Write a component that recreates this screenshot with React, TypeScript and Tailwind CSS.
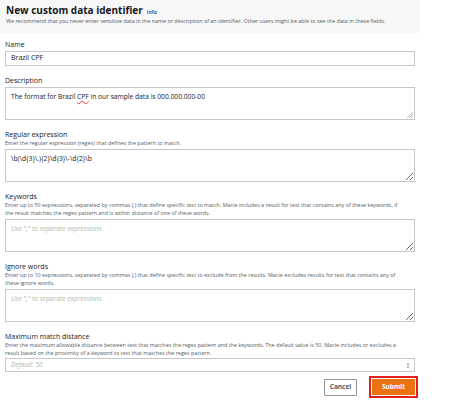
import React from 'react';

const font = { fontFamily: '"Open Sans", "Noto Sans", Arial, sans-serif' };

function Label({ children }: { children: React.ReactNode }) {
  return <div className="text-[7px] leading-[9px] font-medium text-[#16191f]">{children}</div>;
}

function Help({ lines }: { lines: string[] }) {
  return (
    <div className="text-[5.4px] leading-[8px] text-[#545b64]">
      {lines.map((l) => (
        <div key={l} className="whitespace-nowrap">{l}</div>
      ))}
    </div>
  );
}

function Area({ value, placeholder }: { value?: string; placeholder?: string }) {
  return (
    <textarea
      defaultValue={value}
      placeholder={placeholder}
      spellCheck={false}
      className="mt-[2px] block h-[33px] w-full resize-y border border-[#c6c6cd] bg-white px-[5px] py-[4px] text-[6.7px] leading-[9px] text-[#16191f] placeholder:italic placeholder:text-[#aab7b8] outline-none"
      style={font}
    />
  );
}

export default function App() {
  return (
    <div className="h-[404px] w-[474px] bg-white" style={font}>
      <div className="w-[420px] bg-[#f7f7f7] px-[6px] pt-[4px] h-[33px]">
        <div className="flex items-baseline gap-[4px]">
          <h1 className="text-[10px] leading-[13px] font-bold text-[#16191f]">New custom data identifier</h1>
          <span className="text-[5px] font-bold text-[#0073bb]">Info</span>
        </div>
        <p className="text-[5.4px] leading-[8px] text-[#545b64] whitespace-nowrap">
          We recommend that you never enter sensitive data in the name or description of an identifier. Other users might be able to see the data in these fields.
        </p>
      </div>

      <div className="w-[415px] pl-[5px] pt-[7px] flex flex-col gap-[10px]">
        <div>
          <Label>Name</Label>
          <div className="mt-[2px] h-[15px] border border-[#c6c6cd] px-[5px] flex items-center text-[7px] text-[#16191f]">
            Brazil CPF
          </div>
        </div>

        <div>
          <Label>Description</Label>
          <div className="mt-[2px] relative h-[33px] border border-[#c6c6cd] px-[5px] py-[4px] text-[6.7px] leading-[9px] text-[#16191f]">
            The format for Brazil{' '}
            <span className="underline decoration-wavy decoration-red-500 decoration-[0.5px] underline-offset-[1px]">CPF</span>{' '}
            in our sample data is 000.000.000-00
            <svg className="absolute bottom-[1px] right-[1px]" width="6" height="6" viewBox="0 0 6 6">
              <path d="M6 0 L0 6 M6 2 L2 6 M6 4 L4 6" stroke="#999" strokeWidth="0.6" />
            </svg>
          </div>
        </div>

        <div>
          <Label>Regular expression</Label>
          <Help lines={['Enter the regular expression (regex) that defines the pattern to match.']} />
          <Area value={'\\b(\\d{3}\\.){2}\\d{3}\\-\\d{2}\\b'} />
        </div>

        <div>
          <Label>Keywords</Label>
          <Help
            lines={[
              'Enter up to 50 expressions, separated by commas (,) that define specific text to match. Macie includes a result for text that contains any of these keywords, if',
              'the result matches the regex pattern and is within distance of one of these words.',
            ]}
          />
          <Area placeholder={'Use "," to separate expressions'} />
        </div>

        <div>
          <Label>Ignore words</Label>
          <Help
            lines={[
              'Enter up to 10 expressions, separated by commas (,) that define specific text to exclude from the results. Macie excludes results for text that contains any of',
              'these ignore words.',
            ]}
          />
          <Area placeholder={'Use "," to separate expressions'} />
        </div>

        <div>
          <Label>Maximum match distance</Label>
          <Help
            lines={[
              'Enter the maximum allowable distance between text that matches the regex pattern and the keywords. The default value is 50. Macie includes or excludes a',
              'result based on the proximity of a keyword to text that matches the regex pattern.',
            ]}
          />
          <div className="mt-[1px] h-[14px] border border-[#c6c6cd] pl-[5px] pr-[4px] flex items-center justify-between">
            <span className="text-[6.5px] italic text-[#aab7b8]">Default: 50</span>
            <svg width="4" height="7" viewBox="0 0 4 7">
              <path d="M0.5 2.5 L2 1 L3.5 2.5 Z M0.5 4.5 L2 6 L3.5 4.5 Z" fill="#777" />
            </svg>
          </div>
        </div>
      </div>

      <div className="w-[418px] mt-[4px] flex justify-end items-center gap-[12px]">
        <button className="h-[17px] w-[33px] border border-[#8d9096] bg-white text-[6.5px] font-bold text-[#545b64] rounded-[1px]">
          Cancel
        </button>
        <div className="border-2 border-[#e02020] p-[1px]">
          <button className="block h-[16px] w-[43px] bg-[#ec7211] text-[6.5px] font-bold text-white">Submit</button>
        </div>
      </div>
    </div>
  );
}
